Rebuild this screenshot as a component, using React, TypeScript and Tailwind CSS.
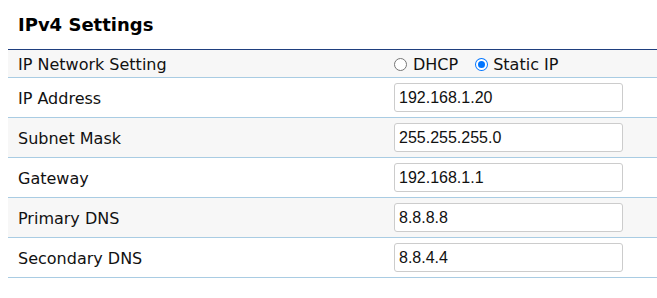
import React from "react";

const rows = [
  { label: "IP Address", value: "192.168.1.20" },
  { label: "Subnet Mask", value: "255.255.255.0" },
  { label: "Gateway", value: "192.168.1.1" },
  { label: "Primary DNS", value: "8.8.8.8" },
  { label: "Secondary DNS", value: "8.8.4.4" },
];

export default function App() {
  return (
    <div className="w-[657px] h-[298px] bg-white overflow-hidden" style={{ fontFamily: "'DejaVu Sans', Verdana, sans-serif" }}>
      <div className="pl-[18px] pt-[12px] h-[49px] text-[18px] font-bold text-black leading-[26px]">IPv4 Settings</div>
      <div className="ml-[8px] w-[660px] border-t-[1.5px] border-[#1f3f7f]">
        <div className="flex items-center h-[28px] pt-[2px] bg-[#f7f7f7] border-b border-[#a9cce3] text-[16px] text-[#111]">
          <div className="pl-[10px] w-[386px]">IP Network Setting</div>
          <label className="flex items-center">
            <span className="w-[13px] h-[13px] rounded-full border border-[#767676] bg-white" />
            <span className="ml-[6px]">DHCP</span>
          </label>
          <label className="flex items-center ml-[17px]">
            <span className="w-[13px] h-[13px] rounded-full bg-[#0075ff] flex items-center justify-center">
              <span className="w-[11px] h-[11px] rounded-full border-[2.5px] border-white bg-[#0075ff]" />
            </span>
            <span className="ml-[5px]">Static IP</span>
          </label>
        </div>
        {rows.map((r, i) => (
          <div
            key={r.label}
            className={`flex items-center h-[40px] border-b border-[#a9cce3] ${i % 2 === 1 ? "bg-[#f7f7f7]" : "bg-white"}`}
          >
            <div className="pl-[10px] w-[386px] pt-[2px] text-[16px] text-[#111]">{r.label}</div>
            <input
              readOnly
              value={r.value}
              className="w-[229px] h-[29px] px-[4px] border border-[#cccccc] rounded-[3px] bg-white text-[16px] text-[#111] outline-none"
              style={{ fontFamily: "'Liberation Sans', Arial, sans-serif" }}
            />
          </div>
        ))}
      </div>
    </div>
  );
}
